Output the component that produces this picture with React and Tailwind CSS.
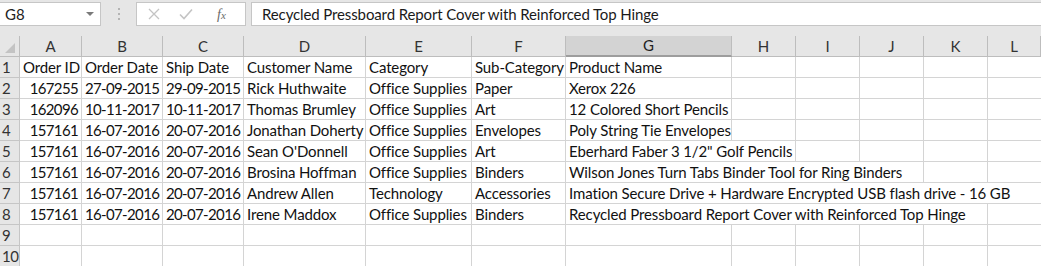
import React from "react";

const COLS = ["A", "B", "C", "D", "E", "F", "G", "H", "I", "J", "K", "L"];

const ROWS = [
  ["Order ID", "Order Date", "Ship Date", "Customer Name", "Category", "Sub-Category", "Product Name", 1],
  [167255, "27-09-2015", "29-09-2015", "Rick Huthwaite", "Office Supplies", "Paper", "Xerox 226", 1],
  [162096, "10-11-2017", "10-11-2017", "Thomas Brumley", "Office Supplies", "Art", "12 Colored Short Pencils", 1],
  [157161, "16-07-2016", "20-07-2016", "Jonathan Doherty", "Office Supplies", "Envelopes", "Poly String Tie Envelopes", 1],
  [157161, "16-07-2016", "20-07-2016", "Sean O'Donnell", "Office Supplies", "Art", 'Eberhard Faber 3 1/2" Golf Pencils', 2],
  [157161, "16-07-2016", "20-07-2016", "Brosina Hoffman", "Office Supplies", "Binders", "Wilson Jones Turn Tabs Binder Tool for Ring Binders", 4],
  [157161, "16-07-2016", "20-07-2016", "Andrew Allen", "Technology", "Accessories", "Imation Secure Drive + Hardware Encrypted USB flash drive - 16 GB", 6],
  [157161, "16-07-2016", "20-07-2016", "Irene Maddox", "Office Supplies", "Binders", "Recycled Pressboard Report Cover with Reinforced Top Hinge", 5],
  null,
  null,
];

const SPAN = {
  1: "col-span-1",
  2: "col-span-2",
  4: "col-span-4",
  5: "col-span-5",
  6: "col-span-6",
};

const font = { fontFamily: "Lato, 'Liberation Sans', sans-serif" };

// digits in Lato run wider than Calibri, so numeric cells get tighter tracking
const isDigits = (v) => typeof v === "number" || /^[\d-]+$/.test(v);

function Cell({ children, right, span = 1, last }) {
  const tight = children != null && isDigits(children);
  return (
    <div
      className={`${SPAN[span]} h-[21px] border-b border-[#d4d4d4] ${last ? "" : "border-r"} flex items-end pb-[1px] whitespace-nowrap overflow-visible text-[15px] leading-[18px] text-[#111] ${
        tight ? "tracking-[-0.65px]" : "tracking-[-0.12px]"
      } ${right ? "justify-end pr-[3px]" : "pl-[3px]"}`}
    >
      {children}
    </div>
  );
}

function FormulaBar() {
  return (
    <div className="h-[36px] bg-[#e6e6e6] flex items-start pt-[2px] gap-[5px]">
      <div className="w-[101px] h-[24px] bg-white border border-[#c6c6c6] border-l-0 flex items-center justify-between pl-[5px] pr-[6px]">
        <span className="text-[15px] text-[#222]">G8</span>
        <span className="w-0 h-0 border-l-[4px] border-r-[4px] border-t-[4px] border-l-transparent border-r-transparent border-t-[#7a7a7a]" />
      </div>
      <div className="w-[25px] h-[24px] flex flex-col items-center justify-center gap-[3px]">
        <span className="w-[2px] h-[2px] bg-[#b4b4b4]" />
        <span className="w-[2px] h-[2px] bg-[#b4b4b4]" />
        <span className="w-[2px] h-[2px] bg-[#b4b4b4]" />
      </div>
      <div className="w-[110px] h-[24px] bg-white border border-[#c6c6c6] flex items-center pl-[11px]">
        <svg width="12" height="12" viewBox="0 0 12 12" className="mr-[19px]">
          <path d="M1 1L11 11M11 1L1 11" stroke="#c4c4c4" strokeWidth="1.3" fill="none" />
        </svg>
        <svg width="14" height="12" viewBox="0 0 14 12" className="mr-[24px]">
          <path d="M1 6.5L5 10.5L13 1.5" stroke="#c4c4c4" strokeWidth="1.6" fill="none" />
        </svg>
        <span className="text-[14px] italic text-[#6a6a6a]" style={{ fontFamily: "'Liberation Serif', serif" }}>
          f<span className="text-[11px]">x</span>
        </span>
      </div>
      <div className="flex-1 h-[24px] bg-white border border-[#c6c6c6] border-r-0 flex items-center pl-[10px]">
        <span className="text-[15px] text-[#1a1a1a] whitespace-nowrap tracking-[-0.12px]">
          Recycled Pressboard Report Cover with Reinforced Top Hinge
        </span>
      </div>
    </div>
  );
}

export default function App() {
  return (
    <div className="w-[1041px] h-[266px] overflow-hidden bg-white" style={font}>
      <FormulaBar />
      <div className="grid grid-cols-[20px_62px_81px_81px_122px_106px_94px_166px_64px_64px_64px_64px_1fr]">
        {/* select-all corner */}
        <div className="h-[21px] bg-[#e6e6e6] border-r border-b border-[#bdbdbd] relative">
          <svg width="12" height="12" viewBox="0 0 12 12" className="absolute right-[3px] bottom-[2px]">
            <path d="M11 1V11H1Z" fill="#c3c3c3" />
          </svg>
        </div>
        {COLS.map((c) => (
          <div
            key={c}
            className={`h-[21px] flex items-center justify-center text-[15px] border-r ${
              c === "G"
                ? "bg-[#d3d3d3] border-b-2 border-b-[#9d9d9d] border-r-[#bdbdbd] text-[#222]"
                : "bg-[#e6e6e6] border-b border-[#bdbdbd] text-[#333]"
            }`}
          >
            {c}
          </div>
        ))}

        {ROWS.map((row, i) => (
          <React.Fragment key={i}>
            <div className="h-[21px] bg-[#e6e6e6] border-r border-b border-[#c6c6c6] flex items-end pb-[1px] pl-[2px] text-[15px] leading-[18px] text-[#333] tracking-[-0.5px]">
              {i + 1}
            </div>
            {row ? (
              <>
                <Cell right={typeof row[0] === "number"}>{row[0]}</Cell>
                <Cell>{row[1]}</Cell>
                <Cell>{row[2]}</Cell>
                <Cell>{row[3]}</Cell>
                <Cell>{row[4]}</Cell>
                <Cell>{row[5]}</Cell>
                <Cell span={row[7]} last={row[7] === 6}>{row[6]}</Cell>
                {COLS.slice(6 + row[7]).map((c, j, arr) => (
                  <Cell key={c} last={j === arr.length - 1}></Cell>
                ))}
              </>
            ) : (
              COLS.map((c, j) => <Cell key={c} last={j === COLS.length - 1}></Cell>)
            )}
          </React.Fragment>
        ))}
      </div>
    </div>
  );
}
